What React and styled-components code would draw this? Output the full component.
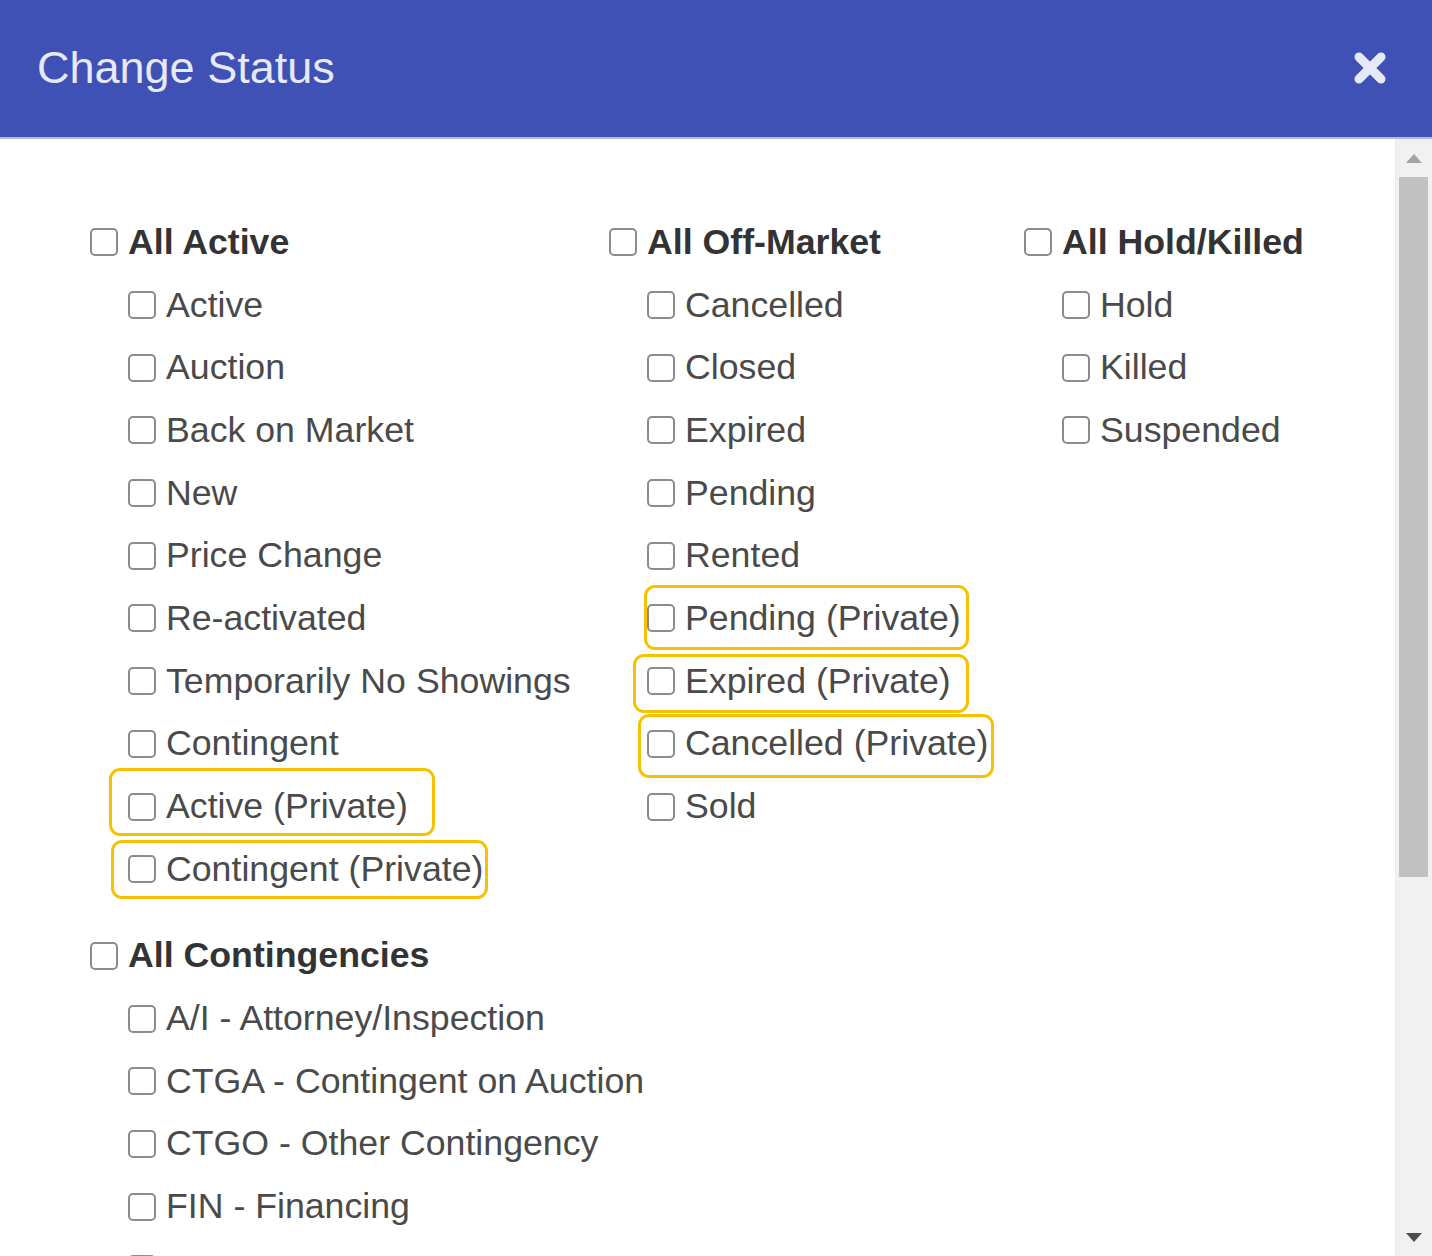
import React from "react";
import styled, { createGlobalStyle } from "styled-components";

const Global = createGlobalStyle`
  html, body { margin: 0; padding: 0; background: #fff; }
  body { font-family: "Liberation Sans", Arial, sans-serif; }
  * { box-sizing: border-box; }
`;

const Dialog = styled.div`
  width: 1432px;
  height: 1256px;
  display: flex;
  flex-direction: column;
  overflow: hidden;
  background: #fff;
`;

const Header = styled.header`
  height: 139px;
  flex: none;
  display: flex;
  align-items: center;
  justify-content: space-between;
  padding: 0 44px 2px 37px;
  background: #3f51b5;
  border-bottom: 2px solid #b3bbe6;
`;

const Title = styled.h1`
  margin: 0;
  font-size: 45px;
  font-weight: 400;
  color: #e6e9f6;
`;

const CloseButton = styled.button`
  width: 36px;
  height: 36px;
  padding: 0;
  border: 0;
  background: none;
  display: flex;
  align-items: center;
  justify-content: center;
  cursor: pointer;
`;

const Body = styled.div`
  flex: 1;
  min-height: 0;
  display: flex;
`;

const Content = styled.div`
  flex: 1;
  overflow: hidden;
  padding: 72px 0 0 90px;
`;

const Section = styled.div`
  display: grid;
  grid-template-columns: 519px 415px 1fr;
  margin-top: ${(p) => p.$gap || 0}px;
`;

const Column = styled.div`
  display: flex;
  flex-direction: column;
`;

const Item = styled.label`
  position: relative;
  display: flex;
  align-items: center;
  gap: 10px;
  height: 62.7px;
  padding-left: ${(p) => (p.$heading ? 0 : 38)}px;
  font-size: 35.7px;
  font-weight: ${(p) => (p.$heading ? 700 : 400)};
  color: ${(p) => (p.$heading ? "#333" : "#4a4a4a")};
  white-space: nowrap;
  cursor: pointer;
`;

const Mark = styled.span`
  position: absolute;
  border: 3px solid #f6c100;
  border-radius: 11px;
  pointer-events: none;
`;

const Box = styled.input.attrs({ type: "checkbox" })`
  appearance: none;
  -webkit-appearance: none;
  flex: none;
  width: 28px;
  height: 28px;
  margin: 0;
  border: 2px solid #8c8c8c;
  border-radius: 5px;
  background: #fff;
`;

const Track = styled.div`
  width: 37px;
  flex: none;
  display: flex;
  flex-direction: column;
  background: #f1f1f1;
  border-left: 1px solid #ececec;
`;

const Arrow = styled.div`
  height: 38px;
  flex: none;
  display: flex;
  align-items: center;
  justify-content: center;
  &::before {
    content: "";
    width: 0;
    height: 0;
    border-left: 8px solid transparent;
    border-right: 8px solid transparent;
    ${(p) =>
      p.$down
        ? "border-top: 9px solid #4d4d4d;"
        : "border-bottom: 9px solid #a3a3a3;"}
  }
`;

const Thumb = styled.div`
  height: 700px;
  flex: none;
  margin: 0 4px 0 3px;
  background: #c1c1c1;
`;

const Spacer = styled.div`
  flex: 1;
`;

const CloseIcon = () => (
  <svg width="36" height="36" viewBox="0 0 36 36">
    <path
      d="M7 7 L29 29 M29 7 L7 29"
      stroke="#e6e9f6"
      strokeWidth="9"
      strokeLinecap="round"
    />
  </svg>
);

const Check = ({ label, heading, mark }) => (
  <Item $heading={heading}>
    {mark && (
      <Mark
        style={{
          left: mark[0],
          top: mark[1],
          width: mark[2],
          height: mark[3],
        }}
      />
    )}
    <Box />
    {label}
  </Item>
);

const sectionOne = [
  {
    title: "All Active",
    items: [
      ["Active"],
      ["Auction"],
      ["Back on Market"],
      ["New"],
      ["Price Change"],
      ["Re-activated"],
      ["Temporarily No Showings"],
      ["Contingent"],
      ["Active (Private)", [19, -7, 326, 68]],
      ["Contingent (Private)", [21, 2, 377, 59]],
    ],
  },
  {
    title: "All Off-Market",
    items: [
      ["Cancelled"],
      ["Closed"],
      ["Expired"],
      ["Pending"],
      ["Rented"],
      ["Pending (Private)", [35, -2, 325, 65]],
      ["Expired (Private)", [24, 4, 336, 59]],
      ["Cancelled (Private)", [29, 1, 356, 64]],
      ["Sold"],
    ],
  },
  {
    title: "All Hold/Killed",
    items: [["Hold"], ["Killed"], ["Suspended"]],
  },
];

const contingencies = [
  "A/I - Attorney/Inspection",
  "CTGA - Contingent on Auction",
  "CTGO - Other Contingency",
  "FIN - Financing",
  "",
];

export default function App() {
  return (
    <>
      <Global />
      <Dialog>
        <Header>
          <Title>Change Status</Title>
          <CloseButton aria-label="Close">
            <CloseIcon />
          </CloseButton>
        </Header>
        <Body>
          <Content>
            <Section>
              {sectionOne.map((group) => (
                <Column key={group.title}>
                  <Check heading label={group.title} />
                  {group.items.map(([label, mark]) => (
                    <Check key={label} label={label} mark={mark} />
                  ))}
                </Column>
              ))}
            </Section>
            <Section $gap={24}>
              <Column>
                <Check heading label="All Contingencies" />
                {contingencies.map((label, i) => (
                  <Check key={i} label={label} />
                ))}
              </Column>
            </Section>
          </Content>
          <Track>
            <Arrow />
            <Thumb />
            <Spacer />
            <Arrow $down />
          </Track>
        </Body>
      </Dialog>
    </>
  );
}
